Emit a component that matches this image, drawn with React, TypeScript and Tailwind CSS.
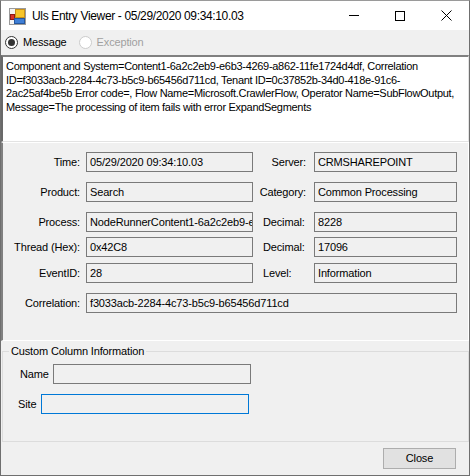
import React from "react";

const msgLines = [
  "Component and System=Content1-6a2c2eb9-e6b3-4269-a862-11fe1724d4df, Correlation",
  "ID=f3033acb-2284-4c73-b5c9-b65456d711cd, Tenant ID=0c37852b-34d0-418e-91c6-",
  "2ac25af4be5b Error code=, Flow Name=Microsoft.CrawlerFlow, Operator Name=SubFlowOutput,",
  "Message=The processing of item fails with error ExpandSegments",
];

function AppIcon() {
  return (
    <svg width="17" height="17" viewBox="0 0 17 17">
      <rect x="0.5" y="0.5" width="16" height="16" fill="#f4f4f4" stroke="#9a9a9a" />
      <rect x="6.5" y="1.5" width="9" height="8" fill="#f7c52a" stroke="#c8901a" />
      <rect x="1.5" y="6.5" width="4" height="5" fill="#d8322a" stroke="#8e1a14" />
      <rect x="5.5" y="10.5" width="10" height="5" fill="#3f7fd6" stroke="#24579e" />
    </svg>
  );
}

function Field({ value, className = "" }: { value: string; className?: string }) {
  return (
    <div
      className={
        "h-[20px] border border-[#7a7a7a] bg-[#f0f0f0] pl-[3px] flex items-center overflow-hidden whitespace-nowrap " +
        className
      }
    >
      {value}
    </div>
  );
}

function Row({
  left,
  leftValue,
  right,
  rightValue,
  rightAlign,
  className = "",
}: {
  left: string;
  leftValue: string;
  right: string;
  rightValue: string;
  rightAlign: "r" | "l";
  className?: string;
}) {
  return (
    <div className={"flex items-center " + className}>
      <div className="w-[77px] text-right">{left}</div>
      <Field value={leftValue} className="ml-[6px] w-[167px]" />
      <div
        className={
          "w-[61px] " + (rightAlign === "r" ? "text-right pr-[8px]" : "pl-[10px]")
        }
      >
        {right}
      </div>
      <Field value={rightValue} className="w-[143px]" />
    </div>
  );
}

export default function App() {
  return (
    <div className="w-[470px] h-[476px] bg-[#f0f0f0] border-x border-b border-t border-[#6f6f6f] border-t-[#9a9a9a] flex flex-col font-['Liberation_Sans',sans-serif] text-[11px] tracking-[-0.15px] text-black overflow-hidden">
      {/* title bar */}
      <div className="h-[29px] bg-white flex items-center shrink-0">
        <div className="ml-[8px] mt-[1px]">
          <AppIcon />
        </div>
        <div className="ml-[6px] text-[12px] tracking-[-0.35px] text-black">Uls Entry Viewer - 05/29/2020 09:34:10.03</div>
        <div className="ml-auto flex h-full">
          <div className="w-[46px] flex items-center justify-center">
            <div className="w-[10px] h-px bg-black" />
          </div>
          <div className="w-[46px] flex items-center justify-center">
            <div className="w-[10px] h-[10px] border border-black" />
          </div>
          <div className="w-[46px] flex items-center justify-center">
            <svg width="11" height="11" viewBox="0 0 11 11">
              <path d="M0.5 0.5 L10.5 10.5 M10.5 0.5 L0.5 10.5" stroke="#000" strokeWidth="1" />
            </svg>
          </div>
        </div>
      </div>

      {/* radio row */}
      <div className="h-[25px] flex items-center shrink-0">
        <div className="ml-[4px] w-[13px] h-[13px] rounded-full border border-[#333] flex items-center justify-center bg-white">
          <div className="w-[7px] h-[7px] rounded-full bg-[#333]" />
        </div>
        <span className="ml-[5px]">Message</span>
        <div className="ml-[12px] w-[13px] h-[13px] rounded-full border border-[#cccccc] bg-white" />
        <span className="ml-[5px] text-[#a0a0a0]">Exception</span>
      </div>

      {/* message box */}
      <div className="h-[87px] shrink-0 bg-white border-t-2 border-l-2 border-b border-r border-t-[#808080] border-l-[#696969] border-b-[#e3e3e3] border-r-[#e3e3e3] pl-[3px] pt-[3px] leading-[13.5px] tracking-[-0.3px] overflow-hidden">
        {msgLines.map((l) => (
          <div key={l} className="whitespace-nowrap">
            {l}
          </div>
        ))}
      </div>

      {/* fields panel */}
      <div className="h-[199px] shrink-0 border-t border-l-2 border-b border-r border-t-[#ffffff] border-l-[#808080] border-b-[#ffffff] border-r-[#ffffff] pt-[9px]">
        <Row left="Time:" leftValue="05/29/2020 09:34:10.03" right="Server:" rightValue="CRMSHAREPOINT" rightAlign="r" />
        <Row left="Product:" leftValue="Search" right="Category:" rightValue="Common Processing" rightAlign="r" className="mt-[10px]" />
        <Row left="Process:" leftValue="NodeRunnerContent1-6a2c2eb9-e" right="Decimal:" rightValue="8228" rightAlign="l" className="mt-[10px]" />
        <Row left="Thread (Hex):" leftValue="0x42C8" right="Decimal:" rightValue="17096" rightAlign="l" className="mt-[5px]" />
        <Row left="EventID:" leftValue="28" right="Level:" rightValue="Information" rightAlign="l" className="mt-[6px]" />
        <div className="flex items-center mt-[10px]">
          <div className="w-[77px] text-right">Correlation:</div>
          <Field value="f3033acb-2284-4c73-b5c9-b65456d711cd" className="ml-[6px] w-[371px]" />
        </div>
      </div>

      {/* custom column group */}
      <div className="relative mt-[10px] h-[91px] shrink-0 border border-[#dcdcdc] ml-[1px]">
        <div className="absolute -top-[7px] left-[6px] px-[2px] bg-[#f0f0f0] leading-[13px]">Custom Column Information</div>
        <div className="flex items-center mt-[12px]">
          <span className="ml-[17px]">Name</span>
          <div className="ml-[4px] w-[198px] h-[20px] border border-[#7a7a7a] bg-[#f0f0f0]" />
        </div>
        <div className="flex items-center mt-[10px]">
          <span className="ml-[15px]">Site</span>
          <div className="ml-[5px] w-[208px] h-[20px] border border-[#0078d7] bg-[#f0f0f0]" />
        </div>
      </div>

      {/* footer */}
      <div className="flex-1 flex justify-end items-start pt-[6px] pr-[13px]">
        <div className="w-[73px] h-[21px] border border-[#adadad] bg-[#e1e1e1] flex items-center justify-center">
          Close
        </div>
      </div>
    </div>
  );
}
